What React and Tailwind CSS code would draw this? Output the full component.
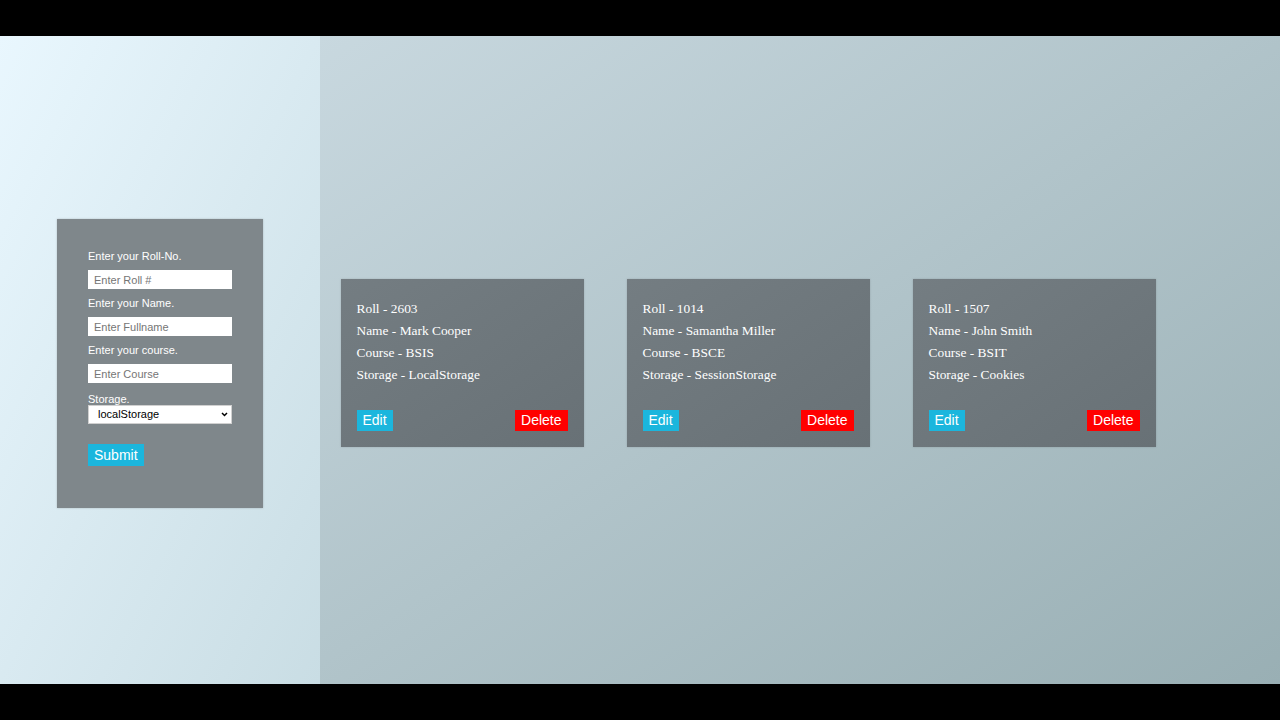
import React from 'react';

const students = [
    { roll: '2603', name: 'Mark Cooper', course: 'BSIS', storage: 'LocalStorage' },
    { roll: '1014', name: 'Samantha Miller', course: 'BSCE', storage: 'SessionStorage' },
    { roll: '1507', name: 'John Smith', course: 'BSIT', storage: 'Cookies' },
];

const sans = { fontFamily: '"Liberation Sans", Arial, sans-serif' };

function Field({ label, placeholder }) {
    return (
        <div className="flex flex-col">
            <label className="text-[11px] leading-[13px] text-white mb-[7px]">{label}</label>
            <input
                placeholder={placeholder}
                className="w-[144px] h-[19px] bg-white px-[6px] text-[11px] text-black placeholder:text-[#757575] outline-none border-0"
                style={sans}
            />
        </div>
    );
}

function StudentCard({ s }) {
    return (
        <div className="w-[243px] h-[168px] mx-[21.5px] flex flex-col justify-between bg-gradient-to-br from-[#747d82] to-[#687176] shadow-[0_0_2px_rgba(0,0,0,0.15)] px-[16px] pt-[19px] pb-[16px]">
            <div className="text-white text-[13.4px] leading-[22px]" style={{ fontFamily: '"Liberation Serif", "Times New Roman", serif' }}>
                <p>Roll - {s.roll}</p>
                <p>Name - {s.name}</p>
                <p>Course - {s.course}</p>
                <p>Storage - {s.storage}</p>
            </div>
            <div className="flex justify-between" style={sans}>
                <button className="h-[21px] px-[6px] bg-[#1bb6dd] text-white text-[14px] leading-[21px]">Edit</button>
                <button className="h-[21px] px-[6px] bg-[#ff0000] text-white text-[14px] leading-[21px]">Delete</button>
            </div>
        </div>
    );
}

export default function App() {
    return (
        <div className="w-[1280px] h-[720px] bg-black flex flex-col justify-center overflow-hidden" style={sans}>
            <div className="h-[648px] flex">
                <div className="w-[320px] flex items-center justify-center bg-gradient-to-br from-[#e9f7fe] to-[#c9dde4]">
                    <div className="w-[206px] h-[289px] mt-[7px] bg-[#7f878b] shadow-[0_0_2px_rgba(0,0,0,0.2)] pl-[31px] pt-[31px]">
                        <div className="flex flex-col gap-[8px]">
                            <Field label="Enter your Roll-No." placeholder="Enter Roll #" />
                            <Field label="Enter your Name." placeholder="Enter Fullname" />
                            <Field label="Enter your course." placeholder="Enter Course" />
                            <div className="flex flex-col mt-[5px]">
                                <label className="text-[11px] leading-[6px] text-white">Storage.</label>
                                <div className="relative w-[144px] h-[19px] mt-[3px]">
                                    <select
                                        className="appearance-none block w-full h-full bg-white text-[11px] leading-[17px] text-black pl-[9px] border border-[#d0d0d0] outline-none"
                                        style={sans}
                                        defaultValue="localStorage"
                                    >
                                        <option value="localStorage">localStorage</option>
                                        <option value="sessionStorage">sessionStorage</option>
                                        <option value="cookies">Cookies</option>
                                    </select>
                                    <svg className="absolute right-[4px] top-[7px] w-[7px] h-[5px] pointer-events-none" viewBox="0 0 7 5">
                                        <path d="M1 1 L3.5 3.5 L6 1" fill="none" stroke="#000" strokeWidth="1.5" />
                                    </svg>
                                </div>
                            </div>
                        </div>
                        <button className="mt-[20px] h-[22px] px-[6px] bg-[#1bb6dd] text-white text-[14px] leading-[22px]">Submit</button>
                    </div>
                </div>
                <div className="flex-1 flex items-center bg-gradient-to-br from-[#c8d8df] to-[#99afb4]">
                    <div className="flex mt-[6px] -ml-[1px]">
                        {students.map((s) => (
                            <StudentCard key={s.roll} s={s} />
                        ))}
                    </div>
                </div>
            </div>
        </div>
    );
}
